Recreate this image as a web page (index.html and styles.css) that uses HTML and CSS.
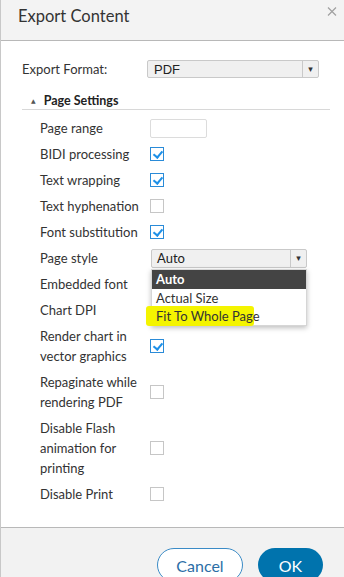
FILE: index.html
```html
<!DOCTYPE html>
<html lang="en">

<head>
    <meta charset="UTF-8">
    <meta name="viewport" content="width=device-width, initial-scale=1.0">
    <title>Export Content</title>
    <link rel="stylesheet" href="styles.css">
</head>

<body>
    <div class="dialog">
        <div class="header">
            <h2 class="title">Export Content</h2>
            <svg class="close" width="10" height="9" viewBox="0 0 10 9">
                <path d="M1 0.5 L9 8.5 M9 0.5 L1 8.5" stroke="#a0a0a0" stroke-width="1.2" fill="none" />
            </svg>
        </div>

        <div class="content">
            <div class="formatRow">
                <span class="formatLabel">Export Format:</span>
                <div class="select formatSelect">
                    <span class="selectText arial">PDF</span>
                    <span class="selectArrow">&#x25BE;</span>
                </div>
            </div>

            <div class="section">
                <span class="caret">&#x25B2;</span>
                <span>Page Settings</span>
            </div>

            <div class="rows">
                <div class="row">
                    <span class="label">Page range</span>
                    <input class="range" type="text">
                </div>
                <div class="row">
                    <span class="label">BIDI processing</span>
                    <span class="check on"></span>
                </div>
                <div class="row">
                    <span class="label">Text wrapping</span>
                    <span class="check on"></span>
                </div>
                <div class="row">
                    <span class="label">Text hyphenation</span>
                    <span class="check"></span>
                </div>
                <div class="row">
                    <span class="label">Font substitution</span>
                    <span class="check on"></span>
                </div>
                <div class="row">
                    <span class="label">Page style</span>
                    <div class="styleWrap">
                        <div class="select styleSelect">
                            <span class="selectText">Auto</span>
                            <span class="selectArrow">&#x25BE;</span>
                        </div>
                        <ul class="options">
                            <li class="active">Auto</li>
                            <li>Actual Size</li>
                            <li><span class="marker"></span><span class="optText">Fit To Whole Page</span></li>
                        </ul>
                    </div>
                </div>
                <div class="row">
                    <span class="label">Embedded font</span>
                </div>
                <div class="row">
                    <span class="label">Chart DPI</span>
                </div>
                <div class="row">
                    <span class="label">Render chart in<br>vector graphics</span>
                    <span class="check on"></span>
                </div>
                <div class="row">
                    <span class="label">Repaginate while<br>rendering PDF</span>
                    <span class="check"></span>
                </div>
                <div class="row">
                    <span class="label">Disable Flash<br>animation for<br>printing</span>
                    <span class="check"></span>
                </div>
                <div class="row">
                    <span class="label">Disable Print</span>
                    <span class="check"></span>
                </div>
            </div>
        </div>

        <div class="footer">
            <button class="btn cancel">Cancel</button>
            <button class="btn ok">OK</button>
        </div>
    </div>
</body>

</html>
```

FILE: styles.css
```css
* {
    padding: 0;
    margin: 0;
    box-sizing: border-box;
}

body {
    font-family: Lato, "Open Sans", sans-serif;
    color: #333;
    background-color: #fff;
    overflow: hidden;
}

.dialog {
    height: 577px;
    border-left: 1px solid #c8c8c8;
    display: flex;
    flex-direction: column;
}

.header {
    height: 41px;
    background-color: #f3f3f3;
    border-bottom: 1px solid #b8b8b8;
    display: flex;
    justify-content: space-between;
    padding: 0 7px 0 17px;
}

.title {
    font-size: 16.5px;
    font-weight: normal;
    color: #333;
    line-height: 32px;
}

.close {
    margin-top: 7px;
}

.content {
    flex: 1;
    padding: 19px 14px 0 21px;
    position: relative;
}

.formatRow {
    display: flex;
    align-items: center;
    height: 18px;
}

.formatLabel {
    font-size: 13px;
    width: 125px;
}

.select {
    display: flex;
    align-items: center;
    background-color: #f0f0f0;
    border: 1px solid #c9c9c9;
    border-radius: 2px;
}

.formatSelect {
    width: 172px;
    height: 18px;
}

.selectText {
    flex: 1;
    font-size: 13px;
    padding-left: 6px;
    color: #222;
}

.arial {
    font-family: "Liberation Sans", Arial, sans-serif;
}

.selectArrow {
    width: 16px;
    height: 100%;
    border-left: 1px solid #c9c9c9;
    font-size: 9px;
    color: #333;
    display: flex;
    align-items: center;
    justify-content: center;
    font-family: "DejaVu Sans", sans-serif;
}

.section {
    margin-top: 15px;
    height: 17px;
    line-height: 16px;
    border-bottom: 1px solid #d8d8d8;
    font-size: 12.5px;
    font-weight: bold;
    color: #222;
    padding-left: 9px;
}

.caret {
    font-size: 6px;
    vertical-align: 2px;
    margin-right: 5px;
    color: #555;
    font-family: "DejaVu Sans", sans-serif;
}

.rows {
    padding-top: 5px;
    padding-left: 18px;
}

.row {
    display: flex;
    align-items: center;
    padding: 3px 0;
}

.label {
    width: 110px;
    font-size: 13px;
    line-height: 20px;
    white-space: nowrap;
}

.range {
    width: 57px;
    height: 19px;
    border: 1px solid #dcdcdc;
    border-radius: 2px;
}

.check {
    width: 14px;
    height: 14px;
    border: 1px solid #c6c6c6;
    display: inline-block;
    position: relative;
}

.check.on {
    border-color: #2a8bd8;
}

.check.on::after {
    content: "";
    position: absolute;
    left: 4px;
    top: 1px;
    width: 4px;
    height: 7px;
    border-right: 2px solid #1e90e8;
    border-bottom: 2px solid #1e90e8;
    transform: rotate(40deg);
}

.styleWrap {
    position: relative;
    margin-left: 1px;
}

.styleSelect {
    width: 156px;
    height: 19px;
}

.styleSelect .selectText {
    padding-left: 5px;
}

.options {
    list-style: none;
    position: absolute;
    top: 20px;
    left: 0;
    width: 156px;
    background-color: #fff;
    border: 1px solid #d6d6d6;
    box-shadow: 0 2px 5px rgba(0, 0, 0, 0.25);
    z-index: 2;
}

.options li {
    font-size: 13px;
    height: 18px;
    line-height: 18px;
    padding-left: 4px;
    position: relative;
}

.options li.active {
    background-color: #444;
    color: #fff;
    font-weight: bold;
    height: 19px;
    line-height: 19px;
}

.marker {
    position: absolute;
    left: -6px;
    top: -1px;
    width: 108px;
    height: 20px;
    background-color: #f4f400;
    border-radius: 3px;
}

.optText {
    position: relative;
}

.footer {
    height: 50px;
    background-color: #f2f2f2;
    border-top: 1px solid #b8b8b8;
    display: flex;
    justify-content: flex-end;
    gap: 15px;
    padding: 20px 21px 0 0;
}

.btn {
    height: 34px;
    border-radius: 17px;
    font-family: Lato, "Open Sans", sans-serif;
    font-size: 16px;
    flex-shrink: 0;
}

.cancel {
    width: 86px;
    background-color: #fff;
    border: 1px solid #3b8bc6;
    color: #2b6ea6;
}

.ok {
    width: 65px;
    background-color: #0073ad;
    border: none;
    color: #fff;
}
```
